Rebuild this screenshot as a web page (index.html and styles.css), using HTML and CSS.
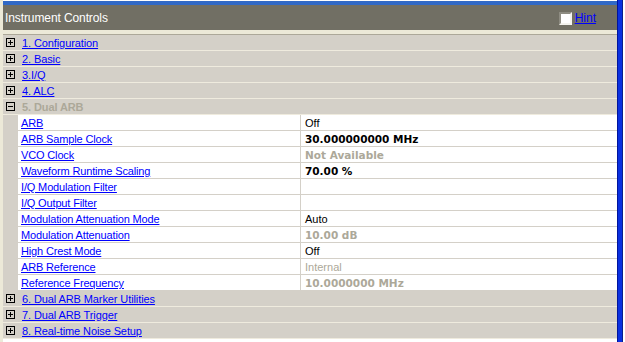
FILE: index.html
```html
<!DOCTYPE html>
<html>
<head>
    <link rel="stylesheet" href="styles.css">
</head>
<body>
    <div class="frame">
        <div class="main">
            <div class="caption-strip"></div>
            <div class="header">
                <span class="title">Instrument Controls</span>
                <label class="hint"><span class="checkbox"></span><a href="#">Hint</a></label>
            </div>
            <div class="tree">
                <div class="section"><span class="toggle plus"></span><a href="#">1. Configuration</a></div>
                <div class="section"><span class="toggle plus"></span><a href="#">2. Basic</a></div>
                <div class="section"><span class="toggle plus"></span><a href="#">3.I/Q</a></div>
                <div class="section"><span class="toggle plus"></span><a href="#">4. ALC</a></div>
                <div class="section open"><span class="toggle minus"></span><span class="section-name">5. Dual ARB</span></div>

                <div class="prop"><div class="indent"></div><div class="label"><a href="#">ARB</a></div><div class="value">Off</div></div>
                <div class="prop"><div class="indent"></div><div class="label"><a href="#">ARB Sample Clock</a></div><div class="value strong">30.000000000 MHz</div></div>
                <div class="prop"><div class="indent"></div><div class="label"><a href="#">VCO Clock</a></div><div class="value strong disabled">Not Available</div></div>
                <div class="prop"><div class="indent"></div><div class="label"><a href="#">Waveform Runtime Scaling</a></div><div class="value strong">70.00 %</div></div>
                <div class="prop"><div class="indent"></div><div class="label"><a href="#">I/Q Modulation Filter</a></div><div class="value"></div></div>
                <div class="prop"><div class="indent"></div><div class="label"><a href="#">I/Q Output Filter</a></div><div class="value"></div></div>
                <div class="prop"><div class="indent"></div><div class="label"><a href="#">Modulation Attenuation Mode</a></div><div class="value">Auto</div></div>
                <div class="prop"><div class="indent"></div><div class="label"><a href="#">Modulation Attenuation</a></div><div class="value strong disabled">10.00 dB</div></div>
                <div class="prop"><div class="indent"></div><div class="label"><a href="#">High Crest Mode</a></div><div class="value">Off</div></div>
                <div class="prop"><div class="indent"></div><div class="label"><a href="#">ARB Reference</a></div><div class="value disabled">Internal</div></div>
                <div class="prop"><div class="indent"></div><div class="label"><a href="#">Reference Frequency</a></div><div class="value strong disabled">10.0000000 MHz</div></div>

                <div class="section"><span class="toggle plus"></span><a href="#">6. Dual ARB Marker Utilities</a></div>
                <div class="section"><span class="toggle plus"></span><a href="#">7. Dual ARB Trigger</a></div>
                <div class="section"><span class="toggle plus"></span><a href="#">8. Real-time Noise Setup</a></div>
            </div>
        </div>
        <div class="edge"></div>
    </div>
</body>
</html>
```

FILE: styles.css
```css
body {
    margin: 0;
    background: #ffffff;
    font-family: 'Liberation Sans', Arial, sans-serif;
    font-size: 11px;
    overflow: hidden;
}

.frame {
    display: flex;
    height: 342px;
}

.main {
    width: 616px;
    padding-left: 3px;
    background: linear-gradient(to right, #ece9d8 3px, #ffffff 3px);
}

.caption-strip {
    height: 4px;
    margin-top: 1px;
    background: #3169c6;
}

.header {
    height: 24px;
    display: flex;
    align-items: center;
    justify-content: space-between;
    padding: 1px 21px 0 2px;
    background: #716f64;
    color: #ffffff;
    border-bottom: 4px solid #ece9d8;
}

.title {
    font-size: 12px;
    letter-spacing: -0.1px;
}

.hint {
    display: flex;
    align-items: center;
    gap: 3px;
}

.checkbox {
    width: 9px;
    height: 9px;
    background: #ffffff;
    border: 2px solid;
    border-color: #8e8c82 #f4f3ee #f4f3ee #8e8c82;
}

.hint a {
    color: #0000ff;
    font-size: 12px;
}

.tree {
    border-top: 1px solid #aca899;
}

.section {
    height: 15px;
    display: flex;
    align-items: center;
    gap: 7px;
    padding-left: 3px;
    background: #d4d0c8;
    border-bottom: 1px solid #efebde;
}

.section a,
.section-name {
    padding-top: 1px;
    letter-spacing: -0.1px;
}

.section a {
    color: #0000ff;
}

.section-name {
    color: #aca899;
    font-weight: bold;
}

.toggle {
    position: relative;
    width: 7px;
    height: 7px;
    border: 1px solid #000000;
}

.toggle::before,
.toggle::after {
    content: '';
    position: absolute;
    background: #000000;
}

.toggle::before {
    left: 1px;
    top: 3px;
    width: 5px;
    height: 1px;
}

.plus::after {
    left: 3px;
    top: 1px;
    width: 1px;
    height: 5px;
}

.prop {
    display: grid;
    grid-template-columns: 15px 283px 1fr;
    height: 16px;
}

.indent {
    background: #d4d0c8;
}

.label,
.value {
    background: #ffffff;
    border-bottom: 1px solid #d4d0c8;
    display: flex;
    align-items: center;
    padding-top: 1px;
}

.label {
    padding-left: 3px;
    border-right: 1px solid #d4d0c8;
    letter-spacing: -0.15px;
}

.label a {
    color: #0000ff;
}

.value {
    padding-left: 4px;
    color: #000000;
}

.value.strong {
    font-family: 'DejaVu Sans', Verdana, sans-serif;
    font-weight: bold;
    font-size: 10.5px;
}

.value.disabled {
    color: #aca899;
}

.edge {
    width: 4px;
    margin-right: 2px;
    background: #0a30e0;
    border-left: 1px solid #00139c;
    border-right: 1px solid #0a1f8a;
}
```
